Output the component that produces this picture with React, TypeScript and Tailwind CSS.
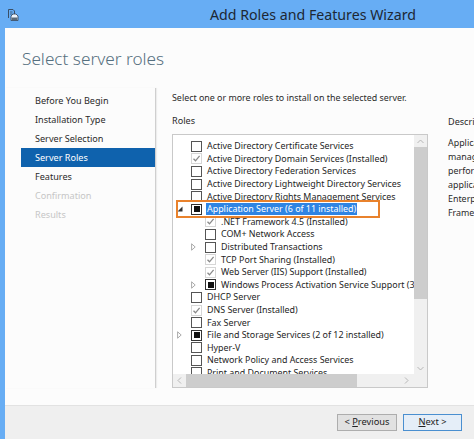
import React from 'react';

type CheckState = 'off' | 'done' | 'partial';

interface Role {
  label: string;
  state: CheckState;
  level: 0 | 1;
  expander?: 'open' | 'closed';
  selected?: boolean;
}

const roles: Role[] = [
  { label: 'Active Directory Certificate Services', state: 'off', level: 0 },
  { label: 'Active Directory Domain Services (Installed)', state: 'done', level: 0 },
  { label: 'Active Directory Federation Services', state: 'off', level: 0 },
  { label: 'Active Directory Lightweight Directory Services', state: 'off', level: 0 },
  { label: 'Active Directory Rights Management Services', state: 'off', level: 0 },
  { label: 'Application Server (6 of 11 installed)', state: 'partial', level: 0, expander: 'open', selected: true },
  { label: '.NET Framework 4.5 (Installed)', state: 'done', level: 1 },
  { label: 'COM+ Network Access', state: 'off', level: 1 },
  { label: 'Distributed Transactions', state: 'off', level: 1, expander: 'closed' },
  { label: 'TCP Port Sharing (Installed)', state: 'done', level: 1 },
  { label: 'Web Server (IIS) Support (Installed)', state: 'done', level: 1 },
  { label: 'Windows Process Activation Service Support (3 of 3 installed)', state: 'partial', level: 1, expander: 'closed' },
  { label: 'DHCP Server', state: 'off', level: 0 },
  { label: 'DNS Server (Installed)', state: 'done', level: 0 },
  { label: 'Fax Server', state: 'off', level: 0 },
  { label: 'File and Storage Services (2 of 12 installed)', state: 'partial', level: 0, expander: 'closed' },
  { label: 'Hyper-V', state: 'off', level: 0 },
  { label: 'Network Policy and Access Services', state: 'off', level: 0 },
  { label: 'Print and Document Services', state: 'off', level: 0 },
];

const steps = [
  { name: 'Before You Begin', kind: 'done' },
  { name: 'Installation Type', kind: 'done' },
  { name: 'Server Selection', kind: 'done' },
  { name: 'Server Roles', kind: 'active' },
  { name: 'Features', kind: 'done' },
  { name: 'Confirmation', kind: 'off' },
  { name: 'Results', kind: 'off' },
];

function Check({ state }: { state: CheckState }) {
  if (state === 'done') {
    return (
      <span className="w-[11px] h-[11px] border border-[#d6d6d6] bg-white flex items-center justify-center shrink-0">
        <svg width="9" height="9" viewBox="0 0 9 9">
          <path d="M1.5 4.8 L3.5 6.8 L7.6 1.8" fill="none" stroke="#8a8a8a" strokeWidth="1.3" />
        </svg>
      </span>
    );
  }
  if (state === 'partial') {
    return (
      <span className="w-[11px] h-[11px] border border-[#333] bg-white flex items-center justify-center shrink-0">
        <span className="w-[6px] h-[6px] bg-[#111]" />
      </span>
    );
  }
  return <span className="w-[11px] h-[11px] border border-[#555] bg-white shrink-0" />;
}

function Expander({ kind }: { kind?: 'open' | 'closed' }) {
  if (kind === 'open') {
    return (
      <svg width="6" height="6" viewBox="0 0 6 6" className="shrink-0">
        <path d="M5.5 0.5 L5.5 5.5 L0.5 5.5 Z" fill="#333" />
      </svg>
    );
  }
  if (kind === 'closed') {
    return (
      <svg width="5" height="8" viewBox="0 0 5 8" className="shrink-0">
        <path d="M0.6 0.8 L4.2 4 L0.6 7.2 Z" fill="none" stroke="#a0a0a0" strokeWidth="0.9" />
      </svg>
    );
  }
  return <span className="w-[6px] shrink-0" />;
}

function RoleRow({ role }: { role: Role }) {
  return (
    <div className={`h-[12.6px] flex items-center whitespace-nowrap ${role.level === 1 ? 'pl-[18px]' : 'pl-[4px]'}`}>
      <span className="w-[14px] shrink-0 flex items-center">
        <Expander kind={role.expander} />
      </span>
      <Check state={role.state} />
      <span
        className={`ml-[4px] px-[1px] leading-[12px] shrink-0 ${
          role.selected ? 'bg-[#2f84e3] text-white' : 'text-[#1e1e1e]'
        }`}
      >
        {role.label}
      </span>
    </div>
  );
}

function WizardIcon() {
  return (
    <svg width="14" height="14" viewBox="0 0 14 14">
      <path d="M1.5 1.5 H6 L7.5 3 V7" fill="none" stroke="#3a4f66" strokeWidth="1" />
      <path d="M1.5 1.5 V10" fill="none" stroke="#3a4f66" strokeWidth="1" />
      <path d="M3 4 H5.5 M3 6 H5.5" stroke="#3a4f66" strokeWidth="0.8" />
      <path d="M4 8 L6 6 H9 L11 8 V12.5 H4 Z" fill="#eef4fb" stroke="#3a4f66" strokeWidth="0.9" />
      <rect x="4.5" y="9.5" width="6" height="2.5" fill="#5b6a78" />
    </svg>
  );
}

export default function App() {
  return (
    <div
      className="w-[474px] h-[439px] bg-[#67adf4] flex flex-col overflow-hidden text-[9.1px]"
      style={{ fontFamily: '"Noto Sans", "Open Sans", Arial, sans-serif' }}
    >
      <div className="h-[28px] shrink-0 flex items-center relative">
        <div className="pl-[7px] pt-[1px]">
          <WizardIcon />
        </div>
        <div className="absolute left-[210px] top-[4px] text-[14.2px] text-[#1d2733]">
          Add Roles and Features Wizard
        </div>
      </div>

      <div className="flex-1 ml-[5px] bg-[#fcfcfc] flex flex-col">
        <div className="h-[60px] shrink-0 pl-[17px] pt-[20px]">
          <div className="text-[17.2px] font-light text-[#56707f] leading-[22px]">Select server roles</div>
        </div>

        <div className="flex h-[300px]">
          <div className="w-[151px] shrink-0 pl-[16px] pt-[3px] border-r border-[#cfcfcf] shadow-[1px_0_1px_rgba(0,0,0,0.06)]">
            {steps.map((s) => (
              <div
                key={s.name}
                className={`h-[19px] flex items-center pl-[14px] ${
                  s.kind === 'active'
                    ? 'bg-[#0f62ad] text-white'
                    : s.kind === 'off'
                    ? 'text-[#c6c6c6]'
                    : 'text-[#2a2a2a]'
                }`}
              >
                {s.name}
              </div>
            ))}
          </div>

          <div className="flex-1 pl-[16px] flex">
            <div className="w-[256px] shrink-0 flex flex-col">
              <div className="h-[17px] mt-[1px] flex items-center text-[#2a2a2a] whitespace-nowrap text-[8.9px]">
                Select one or more roles to install on the selected server.
              </div>
              <div className="h-[17px] mt-[7px] flex items-center text-[#2a2a2a]">Roles</div>
              <div className="mt-[5px] h-[254px] border border-[#c9c9c9] bg-white flex flex-col text-[8.9px]">
                <div className="flex flex-1 min-h-0">
                  <div className="flex-1 min-w-0 overflow-hidden relative pt-[5px]">
                    {roles.map((r) => (
                      <RoleRow key={r.label} role={r} />
                    ))}
                    <div className="absolute left-[3px] top-[65px] w-[204px] h-[18px] border-2 border-[#e9822c]" />
                  </div>
                  <div className="w-[13px] shrink-0 bg-[#f0f0f0] flex flex-col items-center">
                    <div className="h-[12px] flex items-center">
                      <svg width="7" height="5" viewBox="0 0 7 5">
                        <path d="M0.5 4 L3.5 1 L6.5 4" fill="none" stroke="#b0b0b0" strokeWidth="0.9" />
                      </svg>
                    </div>
                    <div className="w-[13px] h-[152px] bg-[#cdcdcd]" />
                    <div className="flex-1" />
                    <div className="h-[12px] flex items-center">
                      <svg width="7" height="5" viewBox="0 0 7 5">
                        <path d="M0.5 1 L3.5 4 L6.5 1" fill="none" stroke="#b0b0b0" strokeWidth="0.9" />
                      </svg>
                    </div>
                  </div>
                </div>
                <div className="h-[13px] shrink-0 bg-[#f0f0f0] flex items-center">
                  <div className="w-[13px] flex justify-center">
                    <svg width="5" height="7" viewBox="0 0 5 7">
                      <path d="M4 0.5 L1 3.5 L4 6.5" fill="none" stroke="#b0b0b0" strokeWidth="0.9" />
                    </svg>
                  </div>
                  <div className="w-[171px] h-[13px] bg-[#cdcdcd]" />
                  <div className="flex-1 flex justify-end pr-[18px]">
                    <svg width="5" height="7" viewBox="0 0 5 7">
                      <path d="M1 0.5 L4 3.5 L1 6.5" fill="none" stroke="#b0b0b0" strokeWidth="0.9" />
                    </svg>
                  </div>
                </div>
              </div>
            </div>
            <div className="pl-[20px] flex flex-col whitespace-nowrap text-[#2a2a2a]">
              <div className="h-[17px] mt-[25px] flex items-center">Description</div>
              <div className="mt-[6px] leading-[14px] text-[8.9px]">
                <div>Application Server provides central</div>
                <div>management and hosting of high-</div>
                <div>performance distributed business</div>
                <div>applications such as those built with</div>
                <div>Enterprise Services and .NET</div>
                <div>Framework 4.5.</div>
              </div>
            </div>
          </div>
        </div>

        <div className="flex-1" />

        <div className="h-[34px] shrink-0 bg-[#efefef] border-t border-[#e2e2e2] flex items-center justify-end pr-[12px] gap-[6px] pb-[1px]">
          <button className="w-[60px] h-[17px] bg-[#e1e1e1] border border-[#adadad] text-[#222] text-[9.3px] flex items-center justify-center">
            &lt;&nbsp;<span className="underline">P</span>revious
          </button>
          <button className="w-[59px] h-[17px] bg-[#e5eef8] border border-[#4a8fd0] text-[#222] text-[9.3px] flex items-center justify-center">
            <span className="underline">N</span>ext&nbsp;&gt;
          </button>
        </div>
      </div>
    </div>
  );
}
